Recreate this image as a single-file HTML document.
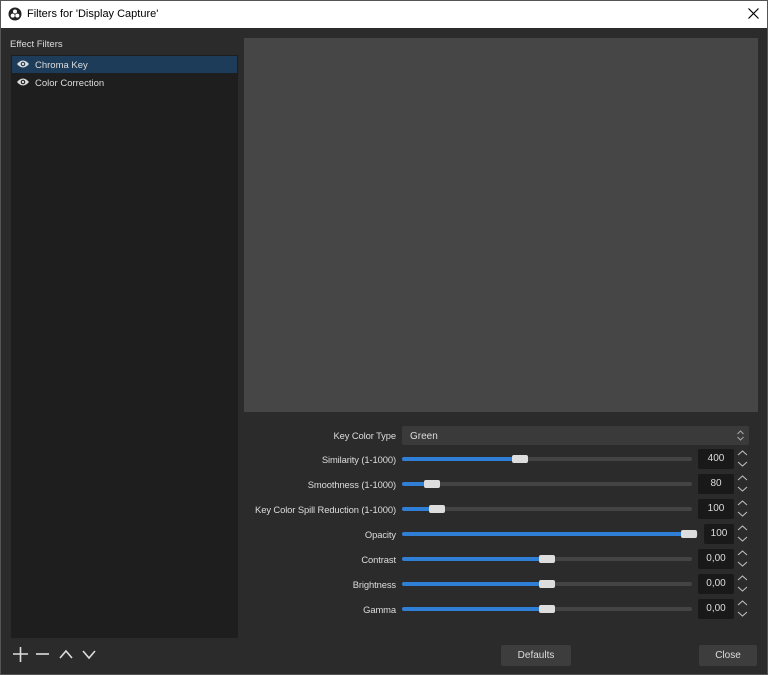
<!DOCTYPE html><html><head><style>
*{margin:0;padding:0;box-sizing:border-box}
body{width:768px;height:675px;background:#2b2b2b;font-family:"Liberation Sans",sans-serif;font-size:10px;color:#ddd;position:relative;overflow:hidden}
.a{position:absolute}
.title{left:0;top:0;width:768px;height:28px;background:#fff;color:#000;font-size:11px}
.lbl{right:372px;width:200px;text-align:right;font-size:9.4px;color:#ddd;letter-spacing:-0.1px}
.tr{height:4px;background:#444;border-radius:2px}
.fl{height:4px;background:#2f7fd6;border-radius:2px}
.h{width:16px;height:8px;background:#ddd;border-radius:2px}
.sp{background:#191919;border-radius:2px;height:20px;font-size:10px;color:#ddd;line-height:20px;text-align:center}
.btn{background:#3d3d3d;border-radius:2px;height:21px;line-height:21px;text-align:center;color:#ddd;font-size:10px}
</style></head><body>
<div class="a" style="left:0;top:0;width:768px;height:675px;border:1px solid #555;z-index:5;pointer-events:none"></div>
<div class="a title">
<svg class="a" style="left:8px;top:7px" width="14" height="14" viewBox="0 0 14 14"><circle cx="7" cy="7" r="6.5" fill="#222"/><circle cx="7" cy="4.5" r="2" fill="#fff"/><circle cx="4.7" cy="8.6" r="2" fill="#fff"/><circle cx="9.3" cy="8.6" r="2" fill="#fff"/></svg>
<div class="a" style="left:27px;top:8px">Filters for 'Display Capture'</div>
<svg class="a" style="left:748px;top:8px" width="11" height="11" viewBox="0 0 11 11" stroke="#000" stroke-width="1.2"><path d="M0.5 0.5l10 10M10.5 0.5l-10 10"/></svg>
</div>
<div class="a" style="left:10px;top:39px;font-size:9.5px">Effect Filters</div>
<div class="a" style="left:10px;top:54px;width:229px;height:585px;background:#1e1e1e;border:1px solid #2a2a2a"></div>
<div class="a" style="left:12px;top:56px;width:225px;height:17px;background:#1d3c5a"></div>
<svg class="a" style="left:16px;top:59px" width="14" height="10" viewBox="0 0 14 10"><path d="M1 5Q7 -2 13 5Q7 12 1 5Z" fill="#ddd"/><circle cx="7" cy="5" r="2.3" fill="#1d3c5a"/><circle cx="7" cy="5" r="1.2" fill="#ddd"/></svg>
<div class="a" style="left:35px;top:60px;font-size:9.5px">Chroma Key</div>
<svg class="a" style="left:16px;top:77px" width="14" height="10" viewBox="0 0 14 10"><path d="M1 5Q7 -2 13 5Q7 12 1 5Z" fill="#ddd"/><circle cx="7" cy="5" r="2.3" fill="#1e1e1e"/><circle cx="7" cy="5" r="1.2" fill="#ddd"/></svg>
<div class="a" style="left:35px;top:78px;font-size:9.5px">Color Correction</div>
<div class="a" style="left:244px;top:38px;width:514px;height:374px;background:#464646"></div>
<div class="a lbl" style="top:430px">Key Color Type</div>
<div class="a" style="left:402px;top:426px;width:347px;height:19px;background:#3a3a3a;border-radius:2px;padding:5px 8px;font-size:10px">Green</div>
<svg class="a" style="left:736px;top:429px" width="9" height="13" viewBox="0 0 9 13" stroke="#aaa" fill="none"><path d="M1.5 5l3-3 3 3M1.5 8l3 3 3-3"/></svg>
<div class="a lbl" style="top:454px">Similarity (1-1000)</div>
<div class="a lbl" style="top:479px">Smoothness (1-1000)</div>
<div class="a lbl" style="top:504px">Key Color Spill Reduction (1-1000)</div>
<div class="a lbl" style="top:529px">Opacity</div>
<div class="a lbl" style="top:554px">Contrast</div>
<div class="a lbl" style="top:579px">Brightness</div>
<div class="a lbl" style="top:604px">Gamma</div>
<div class="a tr" style="left:402px;top:457px;width:290px"></div><div class="a fl" style="left:402px;top:457px;width:115px"></div><div class="a h" style="left:512px;top:455px"></div>
<div class="a tr" style="left:402px;top:482px;width:290px"></div><div class="a fl" style="left:402px;top:482px;width:25px"></div><div class="a h" style="left:424px;top:480px"></div>
<div class="a tr" style="left:402px;top:507px;width:290px"></div><div class="a fl" style="left:402px;top:507px;width:30px"></div><div class="a h" style="left:429px;top:505px"></div>
<div class="a tr" style="left:402px;top:532px;width:296px"></div><div class="a fl" style="left:402px;top:532px;width:285px"></div><div class="a h" style="left:681px;top:530px"></div>
<div class="a tr" style="left:402px;top:557px;width:290px"></div><div class="a fl" style="left:402px;top:557px;width:140px"></div><div class="a h" style="left:539px;top:555px"></div>
<div class="a tr" style="left:402px;top:582px;width:290px"></div><div class="a fl" style="left:402px;top:582px;width:140px"></div><div class="a h" style="left:539px;top:580px"></div>
<div class="a tr" style="left:402px;top:607px;width:290px"></div><div class="a fl" style="left:402px;top:607px;width:140px"></div><div class="a h" style="left:539px;top:605px"></div>
<div class="a sp" style="left:698px;top:449px;width:36px">400</div>
<div class="a sp" style="left:698px;top:474px;width:36px">80</div>
<div class="a sp" style="left:698px;top:499px;width:36px">100</div>
<div class="a sp" style="left:704px;top:524px;width:30px">100</div>
<div class="a sp" style="left:698px;top:549px;width:36px">0,00</div>
<div class="a sp" style="left:698px;top:574px;width:36px">0,00</div>
<div class="a sp" style="left:698px;top:599px;width:36px">0,00</div>
<svg class="a" style="left:736px;top:449px" width="13" height="175" viewBox="0 0 13 175" stroke="#bbb" stroke-width="1.1" fill="none">
<g id="s"><path d="M2 6l4.5-4 4.5 4M2 13l4.5 4 4.5-4"/></g>
<use href="#s" y="25"/><use href="#s" y="50"/><use href="#s" y="75"/><use href="#s" y="100"/><use href="#s" y="125"/><use href="#s" y="150"/>
</svg>
<svg class="a" style="left:12px;top:646px" width="90" height="16" viewBox="0 0 90 16" stroke="#ddd" stroke-width="1.6" fill="none"><path d="M1 8h15M8.5 1v15"/><path d="M24 8h13"/><path d="M48 12l6-7 6 7"/><path d="M71 5l6 7 6-7"/></svg>
<div class="a btn" style="left:501px;top:645px;width:70px">Defaults</div>
<div class="a btn" style="left:699px;top:645px;width:58px">Close</div>
</body></html>
